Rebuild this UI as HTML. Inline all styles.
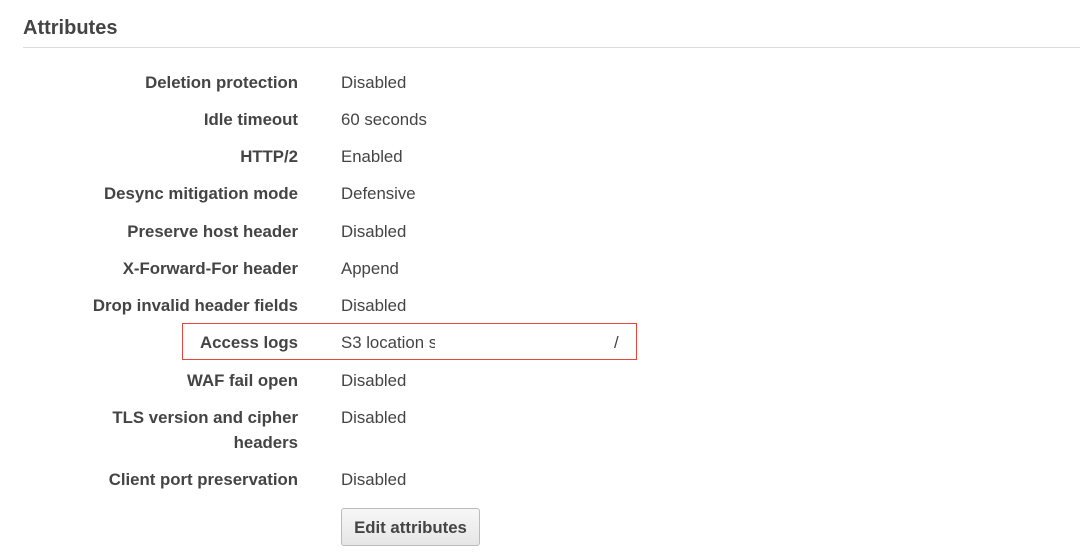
<!DOCTYPE html>
<html><head><style>
body{margin:0;width:1080px;height:554px;background:#fff;font-family:"Liberation Sans",Arial,sans-serif;color:#444;position:relative;overflow:hidden}
h2{position:absolute;left:23px;top:17px;margin:0;font-size:20px;font-weight:bold;color:#444}
.hr{position:absolute;left:23px;right:0;top:47px;height:1px;background:#ddd}
.l{position:absolute;right:782px;font-weight:bold;font-size:16.8px;text-align:right;line-height:25px;white-space:nowrap}
.v{position:absolute;left:341px;font-size:16.8px;line-height:25px;white-space:nowrap}
.box{position:absolute;left:182px;top:323px;width:453px;height:35px;border:1.5px solid #e8463a}
.btn{position:absolute;left:341px;top:508px;width:139px;height:38px;border:1px solid #bbb;border-radius:3px;background:linear-gradient(#f7f7f7,#e6e6e6);font-weight:bold;font-size:16.8px;text-align:center;line-height:37px;box-sizing:border-box}
</style></head><body>
<h2>Attributes</h2><div class="hr"></div>
<div class="l" style="top:70px">Deletion protection</div><div class="v" style="top:70px">Disabled</div>
<div class="l" style="top:107px">Idle timeout</div><div class="v" style="top:107px">60 seconds</div>
<div class="l" style="top:144px">HTTP/2</div><div class="v" style="top:144px">Enabled</div>
<div class="l" style="top:181px">Desync mitigation mode</div><div class="v" style="top:181px">Defensive</div>
<div class="l" style="top:219px">Preserve host header</div><div class="v" style="top:219px">Disabled</div>
<div class="l" style="top:256px">X-Forward-For header</div><div class="v" style="top:256px">Append</div>
<div class="l" style="top:293px">Drop invalid header fields</div><div class="v" style="top:293px">Disabled</div>
<div class="box"></div>
<div class="l" style="top:330px">Access logs</div><div class="v" style="top:330px;width:94px;overflow:hidden">S3 location s</div><div class="v" style="top:330px;left:614px">/</div>
<div class="l" style="top:368px">WAF fail open</div><div class="v" style="top:368px">Disabled</div>
<div class="l" style="top:405px">TLS version and cipher<br>headers</div><div class="v" style="top:405px">Disabled</div>
<div class="l" style="top:467px">Client port preservation</div><div class="v" style="top:467px">Disabled</div>
<div class="btn">Edit attributes</div>
</body></html>
